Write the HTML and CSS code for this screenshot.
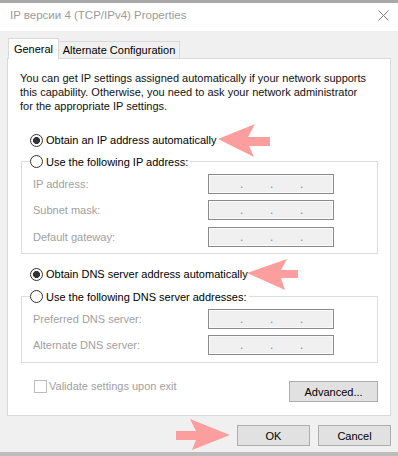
FILE: index.html
```html
<!DOCTYPE html>
<html>
<head>
<meta charset="utf-8">
<link rel="stylesheet" href="styles.css">
</head>
<body>
<div class="topline"></div>
<div class="titlebar">
  <span class="title">IP версии 4 (TCP/IPv4) Properties</span>
  <svg class="close" width="11" height="11" viewBox="0 0 11 11"><path d="M0.5 0.5L10.5 10.5M10.5 0.5L0.5 10.5" stroke="#7a7a7a" stroke-width="1" fill="none"/></svg>
</div>
<div class="main">
  <div class="tabs">
    <div class="tab active">General</div>
    <div class="tab alt">Alternate Configuration</div>
  </div>
  <div class="panel">
    <p class="intro">You can get IP settings assigned automatically if your network supports<br>this capability. Otherwise, you need to ask your network administrator<br>for the appropriate IP settings.</p>
    <div class="radio-row r1"><span class="radio checked"></span><span>Obtain an IP address automatically</span></div>
    <fieldset class="group g1">
      <legend><span class="radio"></span><span>Use the following IP address:</span></legend>
      <div class="field"><span class="lbl">IP address:</span><span class="ip"><span class="dot">.</span><span class="dot">.</span><span class="dot">.</span></span></div>
      <div class="field"><span class="lbl">Subnet mask:</span><span class="ip"><span class="dot">.</span><span class="dot">.</span><span class="dot">.</span></span></div>
      <div class="field f3"><span class="lbl">Default gateway:</span><span class="ip"><span class="dot">.</span><span class="dot">.</span><span class="dot">.</span></span></div>
    </fieldset>
    <div class="radio-row r3"><span class="radio checked"></span><span>Obtain DNS server address automatically</span></div>
    <fieldset class="group g2">
      <legend><span class="radio"></span><span>Use the following DNS server addresses:</span></legend>
      <div class="field"><span class="lbl">Preferred DNS server:</span><span class="ip"><span class="dot">.</span><span class="dot">.</span><span class="dot">.</span></span></div>
      <div class="field"><span class="lbl">Alternate DNS server:</span><span class="ip"><span class="dot">.</span><span class="dot">.</span><span class="dot">.</span></span></div>
    </fieldset>
    <div class="bottom-row">
      <div class="check"><span class="box"></span><span>Validate settings upon exit</span></div>
      <button class="btn adv">Advanced...</button>
    </div>
  </div>
  <div class="footer">
    <button class="btn">OK</button>
    <button class="btn">Cancel</button>
  </div>
</div>
<div class="bottomline"></div>
<svg class="arrows" width="398" height="456" viewBox="0 0 398 456">
  <polygon points="218,139 255,124 248,137 270,137 270,146 249,146 254,157" />
  <polygon points="247,273 287,259 281,270 298,270 298,278 281,278 285,290" />
  <polygon points="230,435 190,419 196,431 176,431 176,440 196,440 192,450" />
</svg>
</body>
</html>
```

FILE: styles.css
```css
* { box-sizing: border-box; }
html, body { margin: 0; padding: 0; }
body {
  width: 398px;
  height: 456px;
  background: #f0f0f0;
  font-family: "Liberation Sans", Arial, sans-serif;
  font-size: 11px;
  color: #000;
  position: relative;
  overflow: hidden;
}
.topline { height: 3px; background: #a8a8a8; }
.titlebar {
  height: 28px;
  background: #fff;
  display: flex;
  justify-content: space-between;
  align-items: flex-start;
  padding: 0 9px 0 10px;
}
.title { color: #9a9a9a; font-size: 11.5px; line-height: 14px; margin-top: 5px; }
.close { margin-top: 7px; }
.main { height: 421px; padding: 7px 7px 0 7px; }
.tabs { display: flex; height: 20px; padding-left: 1px; }
.tab {
  height: 17px;
  margin-top: 3px;
  width: 121px;
  border: 1px solid #d9d9d9;
  border-left: none;
  border-bottom: none;
  background: #f0f0f0;
  text-align: center;
  line-height: 16px;
}
.tab.active {
  height: 21px;
  margin-top: 0;
  width: 51px;
  border-left: 1px solid #d9d9d9;
  background: #fff;
  line-height: 20px;
  position: relative;
  z-index: 1;
}
.panel {
  height: 358px;
  background: #fff;
  border: 1px solid #d9d9d9;
  padding-top: 12px;
}
.intro { margin: 0 0 0 12px; line-height: 14px; color: #111; }
.radio-row { display: flex; align-items: center; height: 14px; margin-left: 22px; gap: 3px; }
.r1 { margin-top: 20px; }
.r3 { margin-top: 13px; }
.radio {
  flex: none;
  width: 13px;
  height: 13px;
  border-radius: 50%;
  border: 1px solid #333;
  background: #fff;
}
.radio.checked { background: radial-gradient(circle, #333 0 3.2px, #fff 3.8px); }
.group {
  margin: 7px 12px 0 13px;
  padding: 5px 0 6px 0;
  border: 1px solid #dcdcdc;
  min-width: 0;
}
.g2 { margin-top: 8px; padding-bottom: 7px; }
.group legend {
  margin-left: 8px;
  padding: 0 2px 0 0;
  height: 15px;
  display: flex;
  align-items: center;
  gap: 3px;
}
.field { display: flex; align-items: center; height: 20px; margin-left: 11px; }
.field + .field { margin-top: 6px; }
.field.f3 { margin-top: 7px; }
.lbl { width: 175px; color: #a0a0a0; }
.ip {
  width: 126px;
  height: 20px;
  border: 1px solid #8a8a8a;
  box-shadow: inset 0 0 0 1px #fafafa;
  background: #f0f0f0;
  display: flex;
  padding-left: 31px;
}
.dot { width: 30px; font-size: 12px; line-height: 18px; color: #8a8a8a; }
.bottom-row {
  display: flex;
  justify-content: space-between;
  align-items: flex-start;
  margin: 16px 12px 0 26px;
}
.check { display: flex; align-items: center; gap: 2px; height: 14px; color: #a0a0a0; }
.box { width: 13px; height: 13px; border: 1px solid #bcbcbc; background: #fff; }
.btn {
  height: 21px;
  width: 73px;
  padding: 0;
  border: 1px solid #adadad;
  background: #e1e1e1;
  font-family: inherit;
  font-size: 11px;
  color: #000;
}
.btn.adv { width: 89px; margin-top: 2px; }
.footer { display: flex; justify-content: flex-end; gap: 8px; margin-top: 9px; }
.bottomline { height: 4px; background: #bdbdbd; }
.arrows { position: absolute; left: 0; top: 0; pointer-events: none; }
.arrows polygon { fill: #fd9e9e; }
```
